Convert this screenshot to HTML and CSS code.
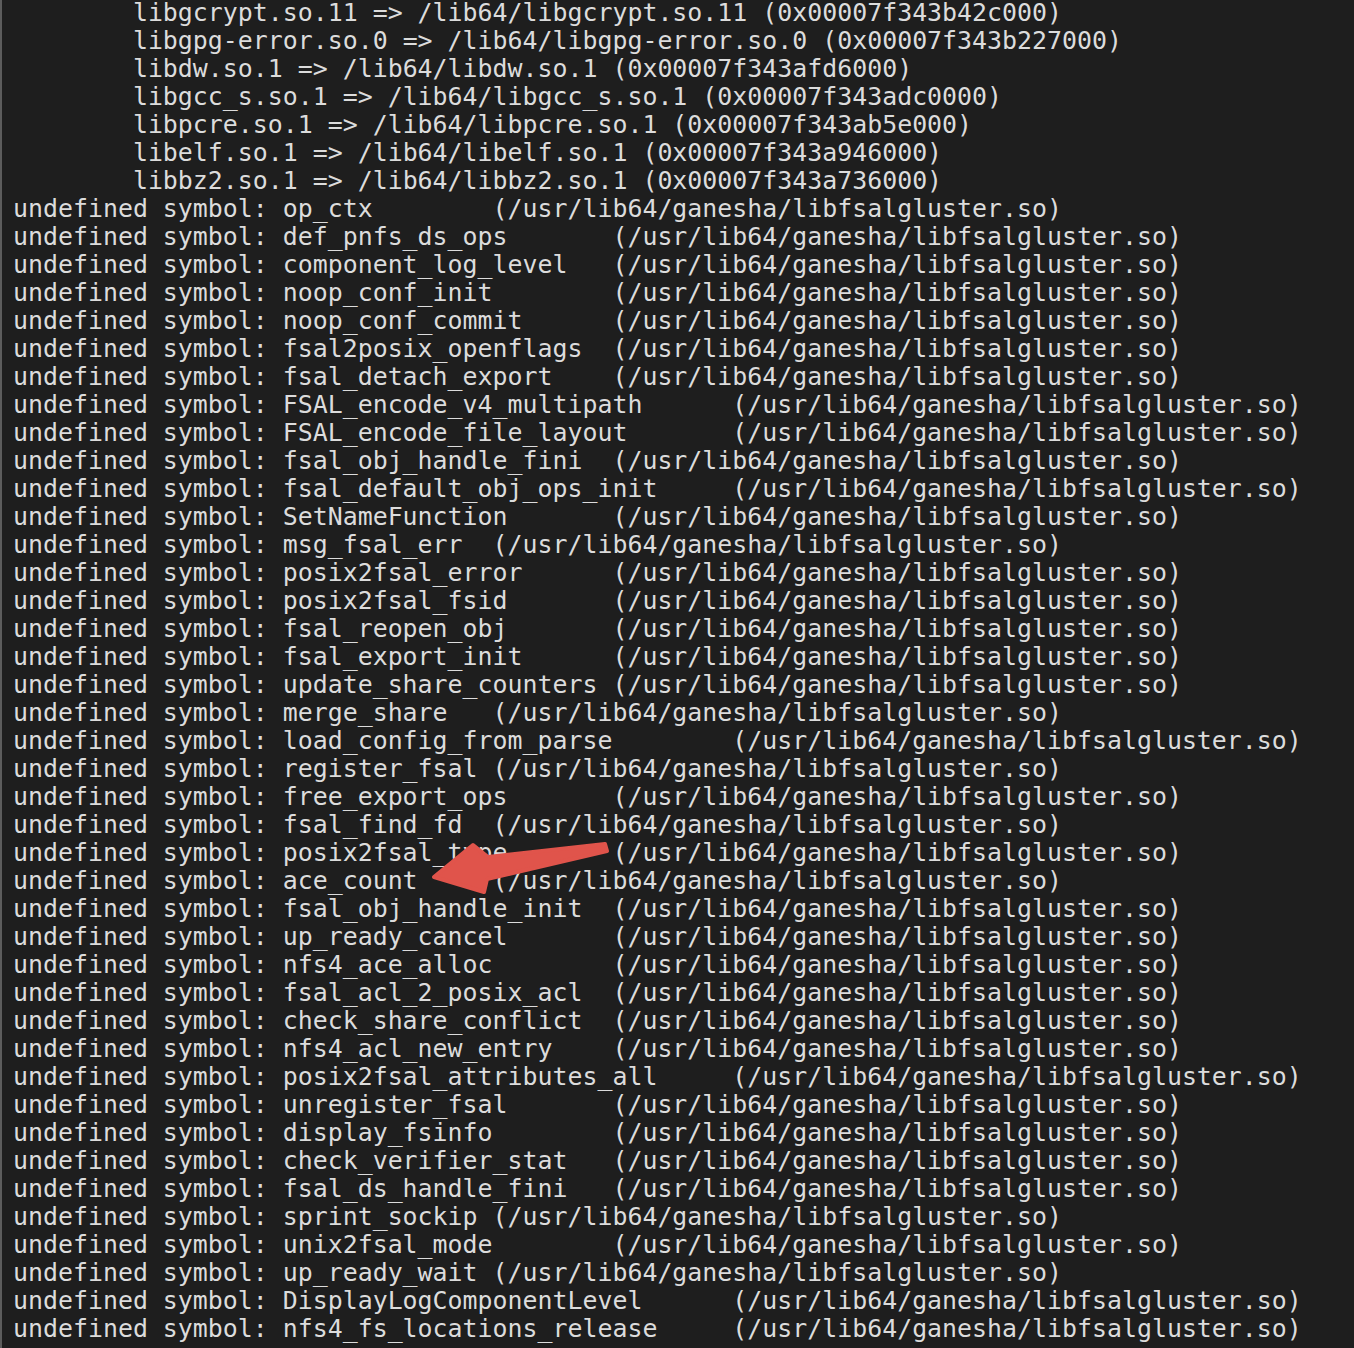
FILE: index.html
```html
<!DOCTYPE html>
<html lang="en">
<head>
	<meta charset="UTF-8" />
	<meta name="viewport" content="width=device-width, initial-scale=1.0" />
	<title>ldd output - undefined symbols</title>

	<link rel="stylesheet" href="styles.css">

</head>
<body>
	<div class="terminal">
<pre class="output">	libgcrypt.so.11 => /lib64/libgcrypt.so.11 (0x00007f343b42c000)
	libgpg-error.so.0 => /lib64/libgpg-error.so.0 (0x00007f343b227000)
	libdw.so.1 => /lib64/libdw.so.1 (0x00007f343afd6000)
	libgcc_s.so.1 => /lib64/libgcc_s.so.1 (0x00007f343adc0000)
	libpcre.so.1 => /lib64/libpcre.so.1 (0x00007f343ab5e000)
	libelf.so.1 => /lib64/libelf.so.1 (0x00007f343a946000)
	libbz2.so.1 => /lib64/libbz2.so.1 (0x00007f343a736000)
undefined symbol: op_ctx	(/usr/lib64/ganesha/libfsalgluster.so)
undefined symbol: def_pnfs_ds_ops	(/usr/lib64/ganesha/libfsalgluster.so)
undefined symbol: component_log_level	(/usr/lib64/ganesha/libfsalgluster.so)
undefined symbol: noop_conf_init	(/usr/lib64/ganesha/libfsalgluster.so)
undefined symbol: noop_conf_commit	(/usr/lib64/ganesha/libfsalgluster.so)
undefined symbol: fsal2posix_openflags	(/usr/lib64/ganesha/libfsalgluster.so)
undefined symbol: fsal_detach_export	(/usr/lib64/ganesha/libfsalgluster.so)
undefined symbol: FSAL_encode_v4_multipath	(/usr/lib64/ganesha/libfsalgluster.so)
undefined symbol: FSAL_encode_file_layout	(/usr/lib64/ganesha/libfsalgluster.so)
undefined symbol: fsal_obj_handle_fini	(/usr/lib64/ganesha/libfsalgluster.so)
undefined symbol: fsal_default_obj_ops_init	(/usr/lib64/ganesha/libfsalgluster.so)
undefined symbol: SetNameFunction	(/usr/lib64/ganesha/libfsalgluster.so)
undefined symbol: msg_fsal_err	(/usr/lib64/ganesha/libfsalgluster.so)
undefined symbol: posix2fsal_error	(/usr/lib64/ganesha/libfsalgluster.so)
undefined symbol: posix2fsal_fsid	(/usr/lib64/ganesha/libfsalgluster.so)
undefined symbol: fsal_reopen_obj	(/usr/lib64/ganesha/libfsalgluster.so)
undefined symbol: fsal_export_init	(/usr/lib64/ganesha/libfsalgluster.so)
undefined symbol: update_share_counters	(/usr/lib64/ganesha/libfsalgluster.so)
undefined symbol: merge_share	(/usr/lib64/ganesha/libfsalgluster.so)
undefined symbol: load_config_from_parse	(/usr/lib64/ganesha/libfsalgluster.so)
undefined symbol: register_fsal	(/usr/lib64/ganesha/libfsalgluster.so)
undefined symbol: free_export_ops	(/usr/lib64/ganesha/libfsalgluster.so)
undefined symbol: fsal_find_fd	(/usr/lib64/ganesha/libfsalgluster.so)
undefined symbol: posix2fsal_type	(/usr/lib64/ganesha/libfsalgluster.so)
undefined symbol: ace_count	(/usr/lib64/ganesha/libfsalgluster.so)
undefined symbol: fsal_obj_handle_init	(/usr/lib64/ganesha/libfsalgluster.so)
undefined symbol: up_ready_cancel	(/usr/lib64/ganesha/libfsalgluster.so)
undefined symbol: nfs4_ace_alloc	(/usr/lib64/ganesha/libfsalgluster.so)
undefined symbol: fsal_acl_2_posix_acl	(/usr/lib64/ganesha/libfsalgluster.so)
undefined symbol: check_share_conflict	(/usr/lib64/ganesha/libfsalgluster.so)
undefined symbol: nfs4_acl_new_entry	(/usr/lib64/ganesha/libfsalgluster.so)
undefined symbol: posix2fsal_attributes_all	(/usr/lib64/ganesha/libfsalgluster.so)
undefined symbol: unregister_fsal	(/usr/lib64/ganesha/libfsalgluster.so)
undefined symbol: display_fsinfo	(/usr/lib64/ganesha/libfsalgluster.so)
undefined symbol: check_verifier_stat	(/usr/lib64/ganesha/libfsalgluster.so)
undefined symbol: fsal_ds_handle_fini	(/usr/lib64/ganesha/libfsalgluster.so)
undefined symbol: sprint_sockip	(/usr/lib64/ganesha/libfsalgluster.so)
undefined symbol: unix2fsal_mode	(/usr/lib64/ganesha/libfsalgluster.so)
undefined symbol: up_ready_wait	(/usr/lib64/ganesha/libfsalgluster.so)
undefined symbol: DisplayLogComponentLevel	(/usr/lib64/ganesha/libfsalgluster.so)
undefined symbol: nfs4_fs_locations_release	(/usr/lib64/ganesha/libfsalgluster.so)</pre>

		<!-- annotation pointing at ace_count -->
		<svg class="arrow" width="1354" height="1348" viewBox="0 0 1354 1348">
			<polygon points="434,877 473,845 488,857 605,844 607,851 487,879 484,892"
				fill="#e0544b" stroke="#e0544b" stroke-width="4" stroke-linejoin="round" />
		</svg>
	</div>
</body>
</html>
```

FILE: styles.css
```css
html, body {
	margin: 0;
	padding: 0;
	background: #1e1e1e;
}

.terminal {
	position: relative;
	height: 1348px;
	overflow: hidden;
	border-left: 2px solid #5c5c5c;
	box-sizing: border-box;
}

.output {
	margin: -1px 0 0;
	padding: 0 0 0 11px;
	font-family: 'DejaVu Sans Mono', 'Liberation Mono', monospace;
	font-size: 24.9px;
	line-height: 28px;
	color: #dcdcdc;
	tab-size: 8;
	white-space: pre;
}

.arrow {
	position: absolute;
	top: 0;
	left: -2px;
	pointer-events: none;
}
```
